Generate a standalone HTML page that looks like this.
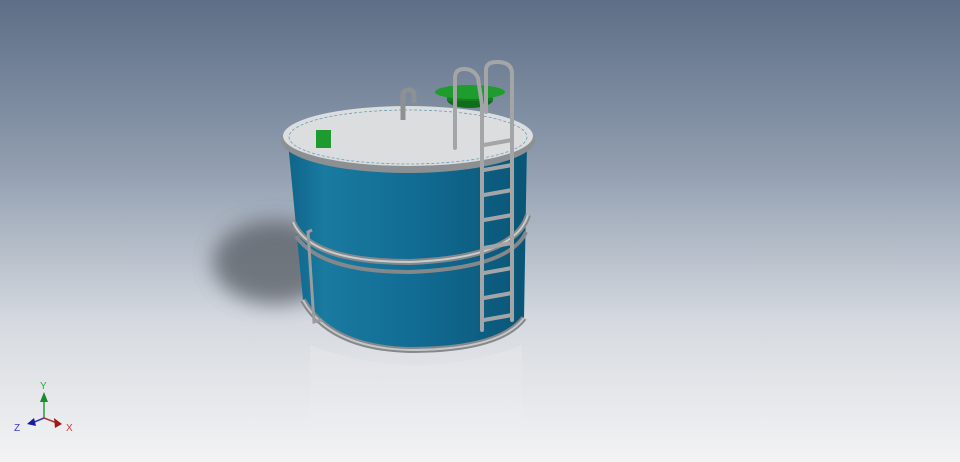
<!DOCTYPE html>
<html><head><style>
html,body{margin:0;padding:0;width:960px;height:462px;overflow:hidden}
</style></head><body>
<svg width="960" height="462" viewBox="0 0 960 462" xmlns="http://www.w3.org/2000/svg">
<defs>
<linearGradient id="bg" x1="0" y1="0" x2="0" y2="1">
<stop offset="0" stop-color="#5d6e86"/>
<stop offset="0.35" stop-color="#8f9cae"/>
<stop offset="0.7" stop-color="#d6dae0"/>
<stop offset="1" stop-color="#f3f3f4"/>
</linearGradient>
<linearGradient id="body" x1="0" y1="0" x2="1" y2="0">
<stop offset="0" stop-color="#0f6489"/>
<stop offset="0.15" stop-color="#1a7aa0"/>
<stop offset="0.5" stop-color="#126d95"/>
<stop offset="1" stop-color="#0a5576"/>
</linearGradient>
<filter id="blur" x="-50%" y="-50%" width="200%" height="200%"><feGaussianBlur stdDeviation="10"/></filter>
<linearGradient id="refl" x1="0" y1="0" x2="0" y2="1">
<stop offset="0" stop-color="#e4e6ea" stop-opacity="0.6"/>
<stop offset="1" stop-color="#f3f3f4" stop-opacity="0"/>
</linearGradient>
</defs>
<rect width="960" height="462" fill="url(#bg)"/>
<path d="M310 345 Q415 385 522 345 L522 462 L310 462 Z" fill="url(#refl)"/>
<ellipse cx="275" cy="262" rx="62" ry="42" fill="#575c63" opacity="0.75" filter="url(#blur)"/>
<path d="M288 142 L527 142 L524 318 Q500 350 410 350 Q330 348 303 300 Z" fill="url(#body)"/>
<path d="M303 300 Q330 348 410 350 Q500 350 524 318" fill="none" stroke="#85888b" stroke-width="6"/>
<path d="M303 300 Q330 348 410 350 Q500 350 524 318" fill="none" stroke="#c4c6c8" stroke-width="2"/>
<path d="M293 222 Q310 262 410 262 Q515 258 528 215" fill="none" stroke="#85888b" stroke-width="6"/>
<path d="M293 222 Q310 262 410 262 Q515 258 528 215" fill="none" stroke="#c9cbcd" stroke-width="2"/>
<path d="M296 236 Q320 272 410 272 Q510 268 526 232" fill="none" stroke="#85888b" stroke-width="4"/>
<path d="M312 230 L308 232 L314 322 L322 320" fill="none" stroke="#9a9c9e" stroke-width="3"/>
<ellipse cx="408" cy="140" rx="127" ry="33" fill="#8d9092"/>
<ellipse cx="408" cy="136" rx="125" ry="30" fill="#dcdddf"/>
<ellipse cx="408" cy="137" rx="119" ry="27" fill="none" stroke="#6a9fb5" stroke-width="0.8" stroke-dasharray="3 2"/>
<rect x="316" y="130" width="15" height="18" fill="#1f9a30"/>
<path d="M403 120 L403 95 Q403 90 409 90 Q414 90 414 96 L414 103" fill="none" stroke="#8e9193" stroke-width="5"/>
<ellipse cx="470" cy="100" rx="23" ry="8" fill="#0f6e1c"/>
<rect x="447" y="93" width="46" height="8" fill="#157e22"/>
<ellipse cx="470" cy="92" rx="35" ry="7" fill="#1e9c2c"/>
<g fill="none" stroke="#a3a5a7" stroke-width="4" stroke-linecap="round">
<path d="M455 148 L455 78 Q455 69 464 69 Q474 69 478 78 L482 105 L482 330"/>
<path d="M486 112 L486 70 Q486 62 497 62 Q512 62 512 74 L512 320"/>
<path d="M484 145 L512 140 M484 170 L512 165 M484 195 L512 190 M484 220 L512 215 M484 248 L512 243 M484 273 L512 268 M484 298 L512 293 M484 320 L512 315"/>
</g>
<line x1="44" y1="418" x2="44" y2="400" stroke="#2a9a3a" stroke-width="1.5"/>
<polygon points="40,402 44,392 48,402" fill="#1a8a2a"/>
<line x1="44" y1="418" x2="32" y2="423" stroke="#3a3aaa" stroke-width="1.5"/>
<polygon points="27,424 34,418 36,426" fill="#1a1aa0"/>
<line x1="44" y1="418" x2="57" y2="423" stroke="#aa3a3a" stroke-width="1.5"/>
<polygon points="62,424 54,418 55,428" fill="#a01a1a"/>
<text x="40" y="389" font-family="Liberation Sans, sans-serif" font-size="10" fill="#2aaa3a">Y</text>
<text x="14" y="431" font-family="Liberation Sans, sans-serif" font-size="10" fill="#3a3acc">Z</text>
<text x="66" y="431" font-family="Liberation Sans, sans-serif" font-size="10" fill="#cc3a3a">X</text>
</svg>
</body></html>
